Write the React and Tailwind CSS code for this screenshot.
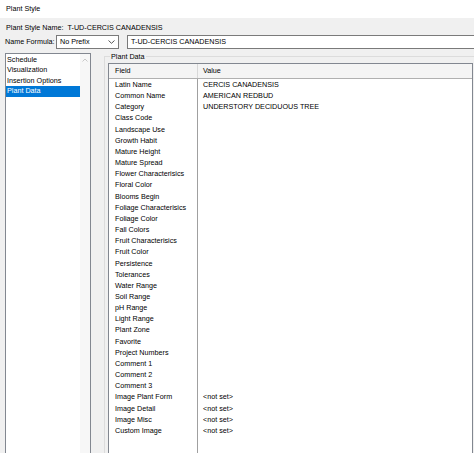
import React from "react";

const fields = [
  ["Latin Name", "CERCIS CANADENSIS"],
  ["Common Name", "AMERICAN REDBUD"],
  ["Category", "UNDERSTORY DECIDUOUS TREE"],
  ["Class Code", ""],
  ["Landscape Use", ""],
  ["Growth Habit", ""],
  ["Mature Height", ""],
  ["Mature Spread", ""],
  ["Flower Characterisics", ""],
  ["Floral Color", ""],
  ["Blooms Begin", ""],
  ["Foliage Characterisics", ""],
  ["Foliage Color", ""],
  ["Fall Colors", ""],
  ["Fruit Characterisics", ""],
  ["Fruit Color", ""],
  ["Persistence", ""],
  ["Tolerances", ""],
  ["Water Range", ""],
  ["Soil Range", ""],
  ["pH Range", ""],
  ["Light Range", ""],
  ["Plant Zone", ""],
  ["Favorite", ""],
  ["Project Numbers", ""],
  ["Comment 1", ""],
  ["Comment 2", ""],
  ["Comment 3", ""],
  ["Image Plant Form", "<not set>"],
  ["Image Detail", "<not set>"],
  ["Image Misc", "<not set>"],
  ["Custom Image", "<not set>"],
];

const sections = ["Schedule", "Visualization", "Insertion Options", "Plant Data"];

function App() {
  return (
    <div
      className="w-[474px] h-[453px] bg-[#f0f0f0] overflow-hidden flex flex-col text-[7.2px] text-black"
      style={{ fontFamily: '"Liberation Sans", Arial, sans-serif' }}
    >
      {/* titre de la fenêtre */}
      <div className="h-[18px] bg-white flex items-center pl-[6px] shrink-0">Plant Style</div>

      <div className="flex items-center h-[12px] mt-[4px] pl-[6px] shrink-0 whitespace-nowrap">
        <span>Plant Style Name:</span>
        <span className="ml-[4px]">T-UD-CERCIS CANADENSIS</span>
      </div>

      <div className="flex items-center h-[14px] mt-[1px] pl-[5px] shrink-0 whitespace-nowrap">
        <span className="w-[51px] shrink-0">Name Formula:</span>
        <div className="w-[63px] h-[14px] shrink-0 bg-white border border-[#7a7a7a] flex items-center justify-between pl-[3px] pr-[3px]">
          <span>No Prefix</span>
          <svg width="7" height="4" viewBox="0 0 7 4" fill="none">
            <path d="M0.5 0.5 L3.5 3.3 L6.5 0.5" stroke="#444" strokeWidth="0.9" />
          </svg>
        </div>
        <div className="ml-[8px] w-[360px] h-[14px] shrink-0 bg-white border border-[#7a7a7a] flex items-center pl-[3px]">
          T-UD-CERCIS CANADENSIS
        </div>
      </div>

      <div className="flex flex-1 min-h-0 mt-[4px] pl-[5px]">
        {/* liste des sections */}
        <div className="w-[86px] bg-white border border-[#828790] border-b-0 flex shrink-0">
          <div className="flex-1 pt-[1px] leading-[10.4px]">
            {sections.map((s) => (
              <div
                key={s}
                className={
                  s === "Plant Data"
                    ? "bg-[#0078d7] text-white pl-[1px]"
                    : "pl-[1px]"
                }
              >
                {s}
              </div>
            ))}
          </div>
          <div className="w-[10px] bg-[#f7f7f7] flex justify-center pt-[4px]">
            <svg width="6" height="4" viewBox="0 0 6 4" fill="none">
              <path d="M0.5 3.5 L3 1 L5.5 3.5" stroke="#c2c2c2" strokeWidth="0.9" />
            </svg>
          </div>
        </div>

        {/* groupe Plant Data */}
        <div className="relative ml-[13px] mt-[3px] w-[380px] shrink-0 border border-[#dcdcdc] border-b-0 pl-[3px] pt-[6px] flex flex-col">
          <span className="absolute left-[5px] top-[-5px] bg-[#f0f0f0] px-[1px] leading-[9px]">Plant Data</span>
          <div className="w-[365px] flex-1 bg-white border border-[#828790] border-b-0 flex flex-col">
            <div className="flex h-[15px] bg-[#f4f4f4] border-b border-[#b0b0b0] shrink-0">
              <div className="w-[89px] pl-[6px] flex items-center border-r border-[#d8d8d8]">Field</div>
              <div className="pl-[5px] flex items-center">Value</div>
            </div>
            <div className="flex flex-1">
              <div className="w-[89px] pl-[6px] border-r border-[#a0a0a0] leading-[11.16px]">
                {fields.map(([f]) => (
                  <div key={f}>{f}</div>
                ))}
              </div>
              <div className="pl-[5px] leading-[11.16px]">
                {fields.map(([f, v]) => (
                  <div key={f} className="h-[11.16px]">{v}</div>
                ))}
              </div>
            </div>
          </div>
        </div>
      </div>
    </div>
  );
}

export default App;
